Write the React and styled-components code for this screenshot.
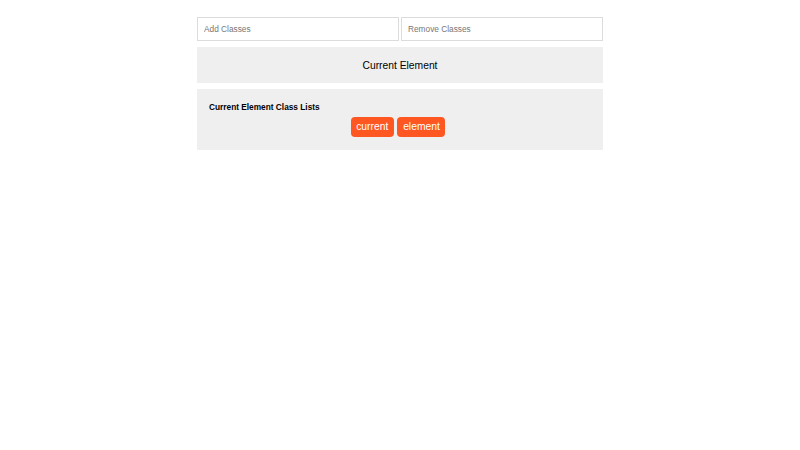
import React, {useState} from 'react';
import styled, {createGlobalStyle} from 'styled-components';

const GlobalStyle = createGlobalStyle`
  body {
    margin: 0;
    background: #fff;
    font-family: "Liberation Sans", Arial, sans-serif;
    color: #000;
  }
`;

const Wrapper = styled.div`
  width: 406px;
  margin: 17px auto 0;
`;

const InputRow = styled.div`
  display: grid;
  grid-template-columns: 1fr 1fr;
  gap: 2px;
`;

const ClassInput = styled.input`
  box-sizing: border-box;
  height: 24px;
  width: 100%;
  padding: 0 6px;
  border: 1px solid #dcdcdc;
  outline: none;
  font-family: "Liberation Sans", Arial, sans-serif;
  font-size: 8.3px;
  color: #333;

  &::placeholder {
    color: #777;
  }
`;

const CurrentBox = styled.div`
  margin-top: 6px;
  height: 36px;
  display: flex;
  align-items: center;
  justify-content: center;
  background: #efefef;
  font-size: 10.3px;
`;

const ListPanel = styled.div`
  margin-top: 6px;
  padding: 13px 12px 13px;
  background: #efefef;
`;

const ListTitle = styled.h5`
  margin: 0;
  font-size: 8.3px;
  line-height: 10px;
  font-weight: bold;
`;

const TagRow = styled.div`
  margin-top: 5px;
  padding-right: 4px;
  display: flex;
  justify-content: center;
  gap: 3.5px;
`;

const Tag = styled.span`
  height: 20px;
  padding: 0 5.7px;
  border-radius: 4px;
  background: #ff5722;
  color: #fff;
  font-size: 10.3px;
  line-height: 20px;
`;

export default function App() {
    const [classes] = useState(['current', 'element']);
    return (
        <Wrapper>
            <GlobalStyle />
            <InputRow>
                <ClassInput placeholder="Add Classes" />
                <ClassInput placeholder="Remove Classes" />
            </InputRow>
            <CurrentBox className={classes.join(' ')}>Current Element</CurrentBox>
            <ListPanel>
                <ListTitle>Current Element Class Lists</ListTitle>
                <TagRow>
                    {classes.map((c) => <Tag key={c}>{c}</Tag>)}
                </TagRow>
            </ListPanel>
        </Wrapper>
    );
}
